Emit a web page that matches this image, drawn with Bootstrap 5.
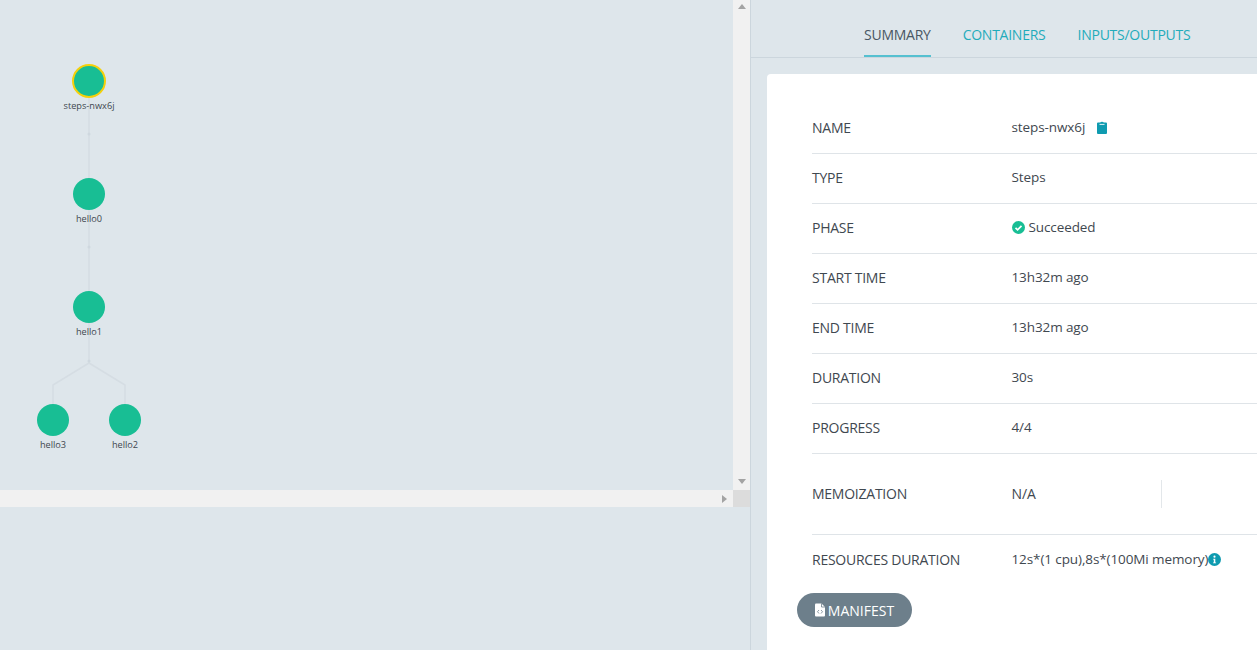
<!DOCTYPE html>
<html lang="en">
<head>
<meta charset="utf-8">
<title>Workflow node</title>
<link href="https://cdn.jsdelivr.net/npm/bootstrap@5.3.0/dist/css/bootstrap.min.css" rel="stylesheet">
<style>
html,body{height:650px;overflow:hidden;}
body{background:#dee6eb;font-family:"Open Sans","Liberation Sans",sans-serif;color:#3f4850;font-size:14px;}
.shell{height:650px;}
.graph-pane{width:751px;flex:none;border-right:1px solid #ccd6dd;}
.graph-grid{display:grid;grid-template-columns:733px 17px;grid-template-rows:490px 17px;}
.graph-view{overflow:hidden;}
.graph-view text{font-size:9.2px;fill:#3f4850;text-anchor:middle;font-family:"Open Sans","Liberation Sans",sans-serif;}
.sb-v{background:#f1f1f1;position:relative;}
.sb-h{background:#f1f1f1;position:relative;}
.sb-corner{background:#dcdcdc;}
.arrow{position:absolute;width:0;height:0;border-style:solid;border-color:transparent;}
.arrow-up{left:5px;top:4px;border-width:0 4px 5px 4px;border-bottom-color:#a3a3a3;}
.arrow-down{left:5px;bottom:6px;border-width:5px 4px 0 4px;border-top-color:#a3a3a3;}
.arrow-right{right:6px;top:5px;border-width:4px 0 4px 5px;border-left-color:#a3a3a3;}
.side{min-width:0;position:relative;}
.tabbar{height:58px;border-bottom:1px solid #ccd6dd;padding-left:113px;gap:32px;}
.tabitem{font-size:14px;height:57px;line-height:70px;color:#00a2b3;text-decoration:none;letter-spacing:-.25px;opacity:.85;}
.tabitem.on{color:#495763;border-bottom:2px solid #55c0d0;opacity:1;}
.panel{background:#fff;margin:16px 0 0 16px;height:600px;border-radius:4px 0 0 0;padding:30px 0 0 45px;}
.info-row{height:50px;border-bottom:1px solid #dfe4e8;display:flex;align-items:center;padding-bottom:3px;}
.info-row.tall{height:81px;padding-bottom:1px;}
.info-row.last{border-bottom:0;padding-bottom:1px;}
.info-key{width:199.5px;flex:none;letter-spacing:-.25px;}
.info-val{display:flex;align-items:center;font-size:13.5px;letter-spacing:-.1px;}
.memo-val{width:149.5px;font-size:14px;}
.vrule{width:1px;height:28px;background:#e3e7ea;}
.ico{flex:none;display:block;}
.ico-clip{margin-left:12px;}
.manifest{position:absolute;left:46px;top:593px;width:115px;height:34px;border-radius:17px;background:#6d7f8b;color:#fff;font-size:14px;display:flex;align-items:center;justify-content:center;gap:3px;border:0;padding:0;}
</style>
</head>
<body>
<div class="d-flex shell">
  <div class="graph-pane">
    <div class="graph-grid">
      <div class="graph-view">
        <svg width="733" height="490" viewBox="0 0 733 490">
          <g fill="none" stroke="#d5dde3" stroke-width="1.5">
            <path d="M89 97V178"/><path d="M89 210V291"/>
            <path d="M89 323V363L53 385V404"/><path d="M89 363L125 385V404"/>
          </g>
          <g fill="#cfd8df"><circle cx="89" cy="134" r="1.5"/><circle cx="89" cy="247" r="1.5"/><circle cx="89" cy="361" r="1.5"/></g>
          <g fill="#18be94">
            <circle cx="89" cy="81" r="16" stroke="#f4d00c" stroke-width="2"/>
            <circle cx="89" cy="194" r="16"/>
            <circle cx="89" cy="307" r="16"/>
            <circle cx="53" cy="420" r="16"/>
            <circle cx="125" cy="420" r="16"/>
          </g>
          <text x="89" y="109">steps-nwx6j</text>
          <text x="89" y="222">hello0</text>
          <text x="89" y="335">hello1</text>
          <text x="53" y="448">hello3</text>
          <text x="125" y="448">hello2</text>
        </svg>
      </div>
      <div class="sb-v"><span class="arrow arrow-up"></span><span class="arrow arrow-down"></span></div>
      <div class="sb-h"><span class="arrow arrow-right"></span></div>
      <div class="sb-corner"></div>
    </div>
  </div>
  <div class="side flex-grow-1">
    <div class="tabbar d-flex">
      <a class="tabitem on" href="#">SUMMARY</a>
      <a class="tabitem" href="#">CONTAINERS</a>
      <a class="tabitem" href="#">INPUTS/OUTPUTS</a>
    </div>
    <div class="panel">
      <div class="info-row"><div class="info-key">NAME</div><div class="info-val">steps-nwx6j
        <svg class="ico ico-clip" width="10" height="13" viewBox="0 0 10 13"><path fill="#0f9bb0" d="M1 1.500h2.200a2 1.500 0 0 1 3.600 0H9a1 1 0 0 1 1 1V12a1 1 0 0 1-1 1H1a1 1 0 0 1-1-1V2.500a1 1 0 0 1 1-1z"/><path d="M2.500 3.400h5" stroke="#dff3f6" stroke-width="1" fill="none"/></svg>
      </div></div>
      <div class="info-row"><div class="info-key">TYPE</div><div class="info-val">Steps</div></div>
      <div class="info-row"><div class="info-key">PHASE</div><div class="info-val">
        <svg class="ico me-1" width="13" height="13" viewBox="0 0 13 13"><circle cx="6.500" cy="6.500" r="6.500" fill="#18be94"/><path d="M3.500 6.800l2.100 2.100 3.900-4" fill="none" stroke="#fff" stroke-width="1.700"/></svg>Succeeded</div></div>
      <div class="info-row"><div class="info-key">START TIME</div><div class="info-val">13h32m ago</div></div>
      <div class="info-row"><div class="info-key">END TIME</div><div class="info-val">13h32m ago</div></div>
      <div class="info-row"><div class="info-key">DURATION</div><div class="info-val">30s</div></div>
      <div class="info-row"><div class="info-key">PROGRESS</div><div class="info-val">4/4</div></div>
      <div class="info-row tall"><div class="info-key">MEMOIZATION</div><div class="info-val"><span class="memo-val">N/A</span><span class="vrule"></span></div></div>
      <div class="info-row last"><div class="info-key">RESOURCES DURATION</div><div class="info-val">12s*(1 cpu),8s*(100Mi memory)
        <svg class="ico" width="13" height="13" viewBox="0 0 13 13"><circle cx="6.500" cy="6.500" r="6.500" fill="#0f9bb0"/><circle cx="6.500" cy="3.700" r="1.100" fill="#fff"/><path d="M5.300 5.800h2v3.600h.8v.9H5v-.9h.8V6.700h-.5z" fill="#fff"/></svg>
      </div></div>
    </div>
    <button class="manifest" type="button">
      <svg class="ico" width="10" height="14" viewBox="0 0 10 13"><path fill="#fff" d="M1 0h5.500L10 3.500V12a1 1 0 0 1-1 1H1a1 1 0 0 1-1-1V1a1 1 0 0 1 1-1z"/><path d="M6.500 0v3.500H10" fill="none" stroke="#6d7f8b" stroke-width=".8"/><path d="M4 6.500L2.500 8.200 4 10M6 6.500l1.500 1.700L6 10" fill="none" stroke="#6d7f8b" stroke-width=".8"/></svg>
      MANIFEST
    </button>
  </div>
</div>
<script src="https://cdn.jsdelivr.net/npm/bootstrap@5.3.0/dist/js/bootstrap.bundle.min.js"></script>
</body>
</html>
